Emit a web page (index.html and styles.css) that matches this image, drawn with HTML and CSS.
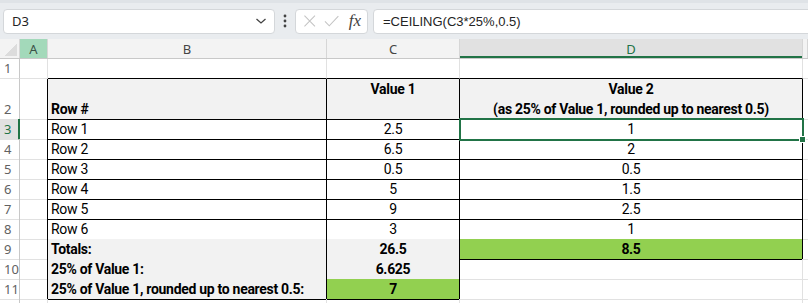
FILE: index.html
```html
<!DOCTYPE html>
<html lang="en">
<head>
    <meta charset="UTF-8">
    <title>Sheet1 - CEILING</title>
    <link rel="stylesheet" href="styles.css">
</head>
<body>
    <div class="formula-bar">
        <div class="name-box">
            <span>D3</span>
            <svg width="12" height="8" viewBox="0 0 12 8"><path d="M1.5 2 L6 6 L10.5 2" fill="none" stroke="#424242" stroke-width="1.3"/></svg>
        </div>
        <div class="more">
            <svg width="4" height="14" viewBox="0 0 4 14"><circle cx="2" cy="2" r="1.4" fill="#424242"/><circle cx="2" cy="7" r="1.4" fill="#424242"/><circle cx="2" cy="12" r="1.4" fill="#424242"/></svg>
        </div>
        <div class="fx-box">
            <svg width="14" height="14" viewBox="0 0 14 14"><path d="M1.5 1.5 L12.5 12.5 M12.5 1.5 L1.5 12.5" stroke="#c4c4c4" stroke-width="1.1" fill="none"/></svg>
            <svg width="16" height="14" viewBox="0 0 16 14"><path d="M1 7.5 L5.5 12 L15 2" stroke="#c4c4c4" stroke-width="1.1" fill="none"/></svg>
            <span class="fx">fx</span>
        </div>
        <div class="formula-input">=CEILING(C3*25%,0.5)</div>
    </div>

    <div class="sheet">
        <div class="row col-head">
            <div class="corner"></div>
            <div class="ch ch-a">A</div>
            <div class="ch">B</div>
            <div class="ch">C</div>
            <div class="ch ch-sel">D</div>
            <div class="ch"></div>
        </div>

        <div class="row">
            <div class="rh">1</div>
            <div class="c"></div>
            <div class="c edge-top"></div>
            <div class="c edge-top"></div>
            <div class="c edge-top"></div>
            <div class="c"></div>
        </div>

        <div class="row tall">
            <div class="rh">2</div>
            <div class="c edge-left"></div>
            <div class="c t gray bold">Row #</div>
            <div class="c t gray bold ctr top">Value 1</div>
            <div class="c t gray bold ctr"><span>Value 2<br>(as 25% of Value 1, rounded up to nearest 0.5)</span></div>
            <div class="c"></div>
        </div>

        <div class="row">
            <div class="rh rh-sel">3</div>
            <div class="c edge-left"></div>
            <div class="c t">Row 1</div>
            <div class="c t ctr">2.5</div>
            <div class="c t ctr selected">1</div>
            <div class="c"></div>
        </div>
        <div class="row">
            <div class="rh">4</div>
            <div class="c edge-left"></div>
            <div class="c t">Row 2</div>
            <div class="c t ctr">6.5</div>
            <div class="c t ctr">2</div>
            <div class="c"></div>
        </div>
        <div class="row">
            <div class="rh">5</div>
            <div class="c edge-left"></div>
            <div class="c t">Row 3</div>
            <div class="c t ctr">0.5</div>
            <div class="c t ctr">0.5</div>
            <div class="c"></div>
        </div>
        <div class="row">
            <div class="rh">6</div>
            <div class="c edge-left"></div>
            <div class="c t">Row 4</div>
            <div class="c t ctr">5</div>
            <div class="c t ctr">1.5</div>
            <div class="c"></div>
        </div>
        <div class="row">
            <div class="rh">7</div>
            <div class="c edge-left"></div>
            <div class="c t">Row 5</div>
            <div class="c t ctr">9</div>
            <div class="c t ctr">2.5</div>
            <div class="c"></div>
        </div>
        <div class="row">
            <div class="rh">8</div>
            <div class="c edge-left"></div>
            <div class="c t">Row 6</div>
            <div class="c t ctr">3</div>
            <div class="c t ctr">1</div>
            <div class="c"></div>
        </div>
        <div class="row">
            <div class="rh">9</div>
            <div class="c edge-left"></div>
            <div class="c t gray bold">Totals:</div>
            <div class="c t gray bold ctr">26.5</div>
            <div class="c t green bold ctr">8.5</div>
            <div class="c"></div>
        </div>
        <div class="row">
            <div class="rh">10</div>
            <div class="c edge-left"></div>
            <div class="c t gray bold">25% of Value 1:</div>
            <div class="c t gray bold ctr">6.625</div>
            <div class="c"></div>
            <div class="c"></div>
        </div>
        <div class="row">
            <div class="rh">11</div>
            <div class="c edge-left"></div>
            <div class="c t gray bold">25% of Value 1, rounded up to nearest 0.5:</div>
            <div class="c t green bold ctr">7</div>
            <div class="c"></div>
            <div class="c"></div>
        </div>
        <div class="row tail">
            <div class="rh"></div>
            <div class="c"></div>
            <div class="c"></div>
            <div class="c"></div>
            <div class="c"></div>
            <div class="c"></div>
        </div>
    </div>
</body>
</html>
```

FILE: styles.css
```css
html {
    font-family: "Liberation Sans", Arial, sans-serif;
}

body {
    margin: 0;
    background-color: #ffffff;
    overflow: hidden;
}

/* formula bar */
.formula-bar {
    display: flex;
    align-items: center;
    height: 39px;
    padding: 0 0 0 3px;
    box-sizing: border-box;
    background-color: #e9ecef;
    border-top: 3px solid #dfe3e7;
}

.name-box {
    display: flex;
    align-items: center;
    justify-content: space-between;
    width: 272px;
    height: 25px;
    box-sizing: border-box;
    padding: 0 7px 0 8px;
    background-color: #ffffff;
    border: 1px solid #d4d7da;
    border-radius: 4px;
    font-family: "Noto Sans", "Liberation Sans", sans-serif;
    font-size: 13px;
    color: #242424;
}

.more {
    width: 20px;
    display: flex;
    justify-content: center;
}

.fx-box {
    display: flex;
    align-items: center;
    gap: 8px;
    width: 73px;
    height: 25px;
    box-sizing: border-box;
    padding: 0 6px 0 7px;
    background-color: #ffffff;
    border: 1px solid #d4d7da;
    border-radius: 4px;
}

.fx {
    font-family: "Liberation Serif", serif;
    font-style: italic;
    font-size: 17px;
    color: #424242;
    margin-left: 1px;
}

.formula-input {
    flex: 1;
    height: 25px;
    margin-left: 5px;
    margin-right: -6px;
    box-sizing: border-box;
    padding: 0 9px;
    line-height: 23px;
    background-color: #ffffff;
    border: 1px solid #d4d7da;
    border-radius: 4px;
    font-size: 13px;
    color: #242424;
}

/* grid */
.sheet {
    font-family: Roboto, "Liberation Sans", sans-serif;
    font-size: 14px;
    letter-spacing: -0.3px;
    color: #000000;
}

.row {
    display: grid;
    grid-template-columns: 20px 28px 279px 133px 343px 1fr;
    height: 20px;
}

.row.tall {
    height: 40px;
}

.row.tail {
    height: 5px;
}

.col-head {
    height: 19px;
    background-color: #f3f3f3;
    border-bottom: 1px solid #c8c8c8;
    box-sizing: content-box;
}

.corner {
    border-right: 1px solid #d6d6d6;
    background: linear-gradient(135deg, transparent 50%, #dcdcdc 50%) no-repeat right 2px bottom 2px / 13px 13px;
}

.ch {
    display: flex;
    align-items: center;
    justify-content: center;
    border-right: 1px solid #d6d6d6;
    font-family: "Noto Sans", "Liberation Sans", sans-serif;
    font-size: 13px;
    letter-spacing: 0;
    color: #444444;
}

.ch-a {
    background-color: #a3d9ba;
    color: #3b5247;
}

.ch-sel {
    background-color: #e1e1e1;
    color: #217346;
    box-shadow: inset 0 -2px 0 #217346;
}

.rh {
    display: flex;
    align-items: flex-end;
    box-sizing: border-box;
    padding: 0 0 1px 4px;
    border-right: 1px solid #c8c8c8;
    border-bottom: 1px solid #e1e1e1;
    font-family: "Noto Sans", "Liberation Sans", sans-serif;
    font-size: 13px;
    letter-spacing: 0;
    line-height: 18px;
    color: #616161;
}

.rh-sel {
    background-color: #e1e1e1;
    color: #217346;
    border-right: 2px solid #217346;
}

.c {
    display: flex;
    align-items: flex-end;
    box-sizing: border-box;
    padding: 0 3px;
    border-right: 1px solid #e1e1e1;
    border-bottom: 1px solid #e1e1e1;
    line-height: 20px;
    white-space: nowrap;
}

.c.t {
    border-right-color: #000000;
    border-bottom-color: #000000;
}

.c.edge-top {
    border-bottom-color: #000000;
}

.c.edge-left {
    border-right-color: #000000;
}

.ctr {
    justify-content: center;
    text-align: center;
}

.top {
    align-items: flex-start;
}

.bold {
    font-weight: bold;
}

.gray {
    background-color: #f2f2f2;
}

.green {
    background-color: #92d050;
}

.selected {
    position: relative;
}

.selected::after {
    content: "";
    position: absolute;
    left: -1px;
    top: -1px;
    right: -2px;
    bottom: -2px;
    border: 2px solid #217346;
}

.selected::before {
    content: "";
    position: absolute;
    right: -4px;
    bottom: -4px;
    width: 5px;
    height: 5px;
    background-color: #217346;
    border: 1px solid #ffffff;
    z-index: 1;
}
```
